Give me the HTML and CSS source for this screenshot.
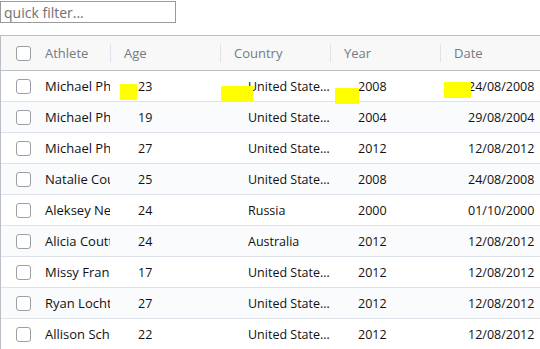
FILE: index.html
```html
<!DOCTYPE html>
<html lang="en">
<head>
  <meta charset="UTF-8" />
  <title>Olympic Winners</title>
  <link rel="stylesheet" href="styles.css">
</head>
<body>
  <input class="quick-filter" type="text" placeholder="quick filter...">

  <div class="grid">
    <div class="grid-header">
      <div class="hcell hcell-athlete"><span class="check"></span>Athlete</div>
      <div class="hcell">Age</div>
      <div class="hcell">Country</div>
      <div class="hcell">Year</div>
      <div class="hcell">Date</div>
    </div>

    <div class="row">
      <div class="cell cell-athlete"><span class="check"></span>Michael Phelps</div>
      <div class="cell">23</div>
      <div class="cell">United State…</div>
      <div class="cell">2008</div>
      <div class="cell">24/08/2008</div>
    </div>
    <div class="row">
      <div class="cell cell-athlete"><span class="check"></span>Michael Phelps</div>
      <div class="cell">19</div>
      <div class="cell">United State…</div>
      <div class="cell">2004</div>
      <div class="cell">29/08/2004</div>
    </div>
    <div class="row">
      <div class="cell cell-athlete"><span class="check"></span>Michael Phelps</div>
      <div class="cell">27</div>
      <div class="cell">United State…</div>
      <div class="cell">2012</div>
      <div class="cell">12/08/2012</div>
    </div>
    <div class="row">
      <div class="cell cell-athlete"><span class="check"></span>Natalie Coughlin</div>
      <div class="cell">25</div>
      <div class="cell">United State…</div>
      <div class="cell">2008</div>
      <div class="cell">24/08/2008</div>
    </div>
    <div class="row">
      <div class="cell cell-athlete"><span class="check"></span>Aleksey Nemov</div>
      <div class="cell">24</div>
      <div class="cell">Russia</div>
      <div class="cell">2000</div>
      <div class="cell">01/10/2000</div>
    </div>
    <div class="row">
      <div class="cell cell-athlete"><span class="check"></span>Alicia Coutts</div>
      <div class="cell">24</div>
      <div class="cell">Australia</div>
      <div class="cell">2012</div>
      <div class="cell">12/08/2012</div>
    </div>
    <div class="row">
      <div class="cell cell-athlete"><span class="check"></span>Missy Franklin</div>
      <div class="cell">17</div>
      <div class="cell">United State…</div>
      <div class="cell">2012</div>
      <div class="cell">12/08/2012</div>
    </div>
    <div class="row">
      <div class="cell cell-athlete"><span class="check"></span>Ryan Lochte</div>
      <div class="cell">27</div>
      <div class="cell">United State…</div>
      <div class="cell">2012</div>
      <div class="cell">12/08/2012</div>
    </div>
    <div class="row">
      <div class="cell cell-athlete"><span class="check"></span>Allison Schmitt</div>
      <div class="cell">22</div>
      <div class="cell">United State…</div>
      <div class="cell">2012</div>
      <div class="cell">12/08/2012</div>
    </div>
  </div>

  <!-- highlight marks drawn over the first row -->
  <div class="mark mark-1"></div>
  <div class="mark mark-2"></div>
  <div class="mark mark-3"></div>
  <div class="mark mark-4"></div>
</body>
</html>
```

FILE: styles.css
```css
body {
  margin: 0;
  padding: 0;
  background: #fff;
  font-family: "Open Sans", Arial, sans-serif;
  overflow: hidden;
  position: relative;
}
.quick-filter {
  display: block;
  box-sizing: border-box;
  width: 176px;
  height: 22px;
  margin: 1px 0 0 0;
  padding: 0 3px;
  border: 1px solid #9a9a9a;
  font-family: "Open Sans", Arial, sans-serif;
  font-size: 14px;
  color: #222;
}
.quick-filter::placeholder {
  color: #707070;
}
.grid {
  margin-top: 12px;
  width: 620px;
  border-top: 1px solid #babfc7;
  border-left: 1px solid #babfc7;
  font-size: 13px;
}
.grid-header {
  display: flex;
  height: 34px;
  background: #f8f8f8;
  border-bottom: 1px solid #babfc7;
  color: #737b83;
}
.hcell {
  width: 110px;
  box-sizing: border-box;
  display: flex;
  align-items: center;
  padding-left: 14px;
  position: relative;
}
.hcell-athlete {
  width: 109px;
  padding-left: 15px;
}
.hcell + .hcell::before {
  content: "";
  position: absolute;
  left: 0;
  top: 8px;
  height: 18px;
  border-left: 1px solid #dde2eb;
}
.check {
  display: inline-block;
  flex: none;
  width: 13px;
  height: 13px;
  border: 1px solid #9aa0a6;
  border-radius: 3px;
  background: #fff;
  margin-right: 14px;
}
.row {
  display: flex;
  height: 30px;
  border-bottom: 1px solid #dde2eb;
  color: #111;
  font-size: 12.5px;
}
.row:nth-child(odd) {
  background: #f9fbfd;
}
.cell {
  width: 110px;
  box-sizing: border-box;
  display: flex;
  align-items: center;
  padding-left: 28px;
  padding-right: 2px;
  white-space: nowrap;
  overflow: hidden;
}
.cell-athlete {
  width: 109px;
  padding-left: 15px;
  padding-right: 0;
  font-size: 13px;
}
.mark {
  position: absolute;
  background: #ffff00;
}
.mark-1 { left: 120px; top: 84px; width: 17px; height: 16px; }
.mark-2 { left: 221px; top: 86px; width: 32px; height: 16px; }
.mark-3 { left: 335px; top: 88px; width: 24px; height: 16px; }
.mark-4 { left: 444px; top: 82px; width: 27px; height: 16px; }
```
